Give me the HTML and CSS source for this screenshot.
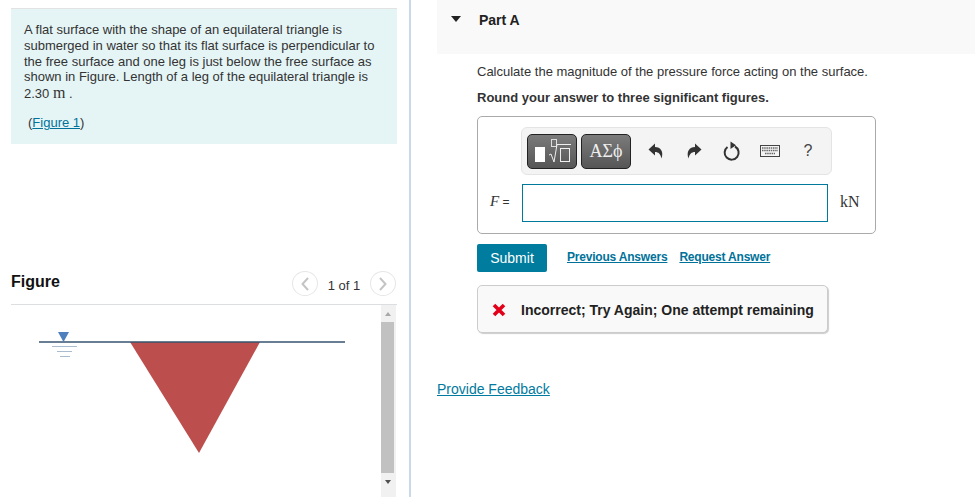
FILE: index.html
```html
<!DOCTYPE html>
<html lang="en">
<head>
    <meta charset="UTF-8">
    <title>Part A</title>
    <link rel="stylesheet" href="styles.css">
</head>
<body>
    <div class="page">
        <div class="left">
            <div class="intro">
                <p>A flat surface with the shape of an equilateral triangle is submerged in water so that its flat surface is perpendicular to the free surface and one leg is just below the free surface as shown in Figure. Length of a leg of the equilateral triangle is<br>2.30 <span class="math meter">m</span> .</p>
                <p class="figlink">(<a href="#">Figure 1</a>)</p>
            </div>

            <div class="fighead">
                <h2>Figure</h2>
                <div class="pager">
                    <span class="circle"><svg width="8" height="14" viewBox="0 0 8 14"><path d="M7 1 L1.5 7 L7 13" fill="none" stroke="#c4c4c4" stroke-width="2"/></svg></span>
                    <span class="count">1 of 1</span>
                    <span class="circle"><svg width="8" height="14" viewBox="0 0 8 14"><path d="M1 1 L6.5 7 L1 13" fill="none" stroke="#c4c4c4" stroke-width="2"/></svg></span>
                </div>
            </div>

            <div class="figbody">
                <svg class="figure" width="370" height="192" viewBox="11 305 370 192">
                    <polygon points="130,342 260,342 199,453" fill="#bc4f4d"/>
                    <line x1="39" y1="342" x2="345" y2="342" stroke="#34536f" stroke-width="1.6"/>
                    <polygon points="58,332 69,332 63.5,342" fill="#4f7fbc"/>
                    <line x1="52" y1="346.5" x2="77" y2="346.5" stroke="#a9bccd"/>
                    <line x1="57" y1="351.5" x2="72" y2="351.5" stroke="#a9bccd"/>
                    <line x1="60" y1="356.5" x2="70" y2="356.5" stroke="#a9bccd"/>
                </svg>
                <div class="scrollbar">
                    <span class="arrow up"></span>
                    <span class="thumb"></span>
                    <span class="arrow down"></span>
                </div>
            </div>
        </div>

        <div class="right">
            <div class="parthead">
                <span class="caret"></span>
                <h3>Part A</h3>
            </div>
            <div class="part">
                <p class="question">Calculate the magnitude of the pressure force acting on the surface.</p>
                <p class="round">Round your answer to three significant figures.</p>

                <div class="answer">
                    <div class="toolbar">
                        <button class="tool" type="button">
                            <svg width="44" height="28" viewBox="0 0 44 28">
                                <rect x="5" y="10" width="10" height="15" fill="#fff"/>
                                <rect x="21.500" y="2.500" width="5" height="7" fill="none" stroke="#ddd"/>
                                <path d="M19 18 L21 17 L24 25 L27 7.500 L41 7.500" fill="none" stroke="#eee"/>
                                <rect x="30.500" y="11.500" width="9" height="13" fill="none" stroke="#eee"/>
                            </svg>
                        </button>
                        <button class="tool greek" type="button">ΑΣϕ</button>
                        <span class="icon">
                            <svg width="16" height="16" viewBox="0 0 16 16"><path d="M0.500 6.500 L7 0.500 V4 C12.500 4 16 8.500 13.500 15.500 C12.500 11 10.500 9 7 9 V12.500 Z" fill="#333"/></svg>
                        </span>
                        <span class="icon">
                            <svg width="16" height="16" viewBox="0 0 16 16"><path d="M15.500 6.500 L9 0.500 V4 C3.500 4 0 8.500 2.500 15.500 C3.500 11 5.500 9 9 9 V12.500 Z" fill="#333"/></svg>
                        </span>
                        <span class="icon">
                            <svg width="18" height="20" viewBox="0 0 18 20"><path d="M4.500 6 A7 7 0 1 0 12 5.500" fill="none" stroke="#333" stroke-width="2"/><path d="M7.500 0.500 L7.500 8 L13 4.200 Z" fill="#333"/></svg>
                        </span>
                        <span class="icon">
                            <svg width="20" height="12" viewBox="0 0 20 12"><rect x="0.500" y="0.500" width="19" height="11" fill="#f4f4f4" stroke="#444"/><path d="M2 3 H18 M2 5.500 H18 M5 8.500 H15" stroke="#666" stroke-width="1.500" stroke-dasharray="1.500 0.700"/></svg>
                        </span>
                        <span class="icon help">?</span>
                    </div>
                    <div class="inputrow">
                        <label class="lhs"><span class="math italic">F</span> =</label>
                        <input class="field" type="text">
                        <span class="math unit">kN</span>
                    </div>
                </div>

                <div class="actions">
                    <button class="submit" type="button">Submit</button>
                    <a class="action" href="#">Previous Answers</a>
                    <a class="action" href="#">Request Answer</a>
                </div>

                <div class="feedback">
                    <svg width="14" height="14" viewBox="0 0 14 14"><path d="M2 2 L12 12 M12 2 L2 12" stroke="#e2001a" stroke-width="3.600"/></svg>
                    <span>Incorrect; Try Again; One attempt remaining</span>
                </div>
            </div>
            <a class="provide" href="#">Provide Feedback</a>
        </div>
    </div>
</body>
</html>
```

FILE: styles.css
```css
*{margin:0; padding:0; box-sizing:border-box;}
html,body{height:100%; overflow:hidden;}
body{font-family:"Liberation Sans", Arial, sans-serif; font-size:14px; color:#333; background:#fff;}
a{color:#00729a;}
.page{display:flex; height:497px;}
.math{font-family:"Liberation Serif", "Times New Roman", serif;}
.italic{font-style:italic;}
.meter{font-size:16px;}

.left{width:411px; height:497px; padding:8px 12px 0 11px; border-right:2px solid #c9d9e8; flex-shrink:0;}
.intro{height:136px; padding:13px 13px 0 13px; font-size:13px; background:#e5f5f6; border-top:1px solid #e2e2e2; line-height:15.8px;}
.intro p:first-child{height:79px;}
.figlink{margin:14px 0 0 4px; line-height:16px;}
.fighead{display:flex; justify-content:space-between; height:33px; margin-top:128px; border-bottom:1px solid #dcdfe2;}
.fighead h2{font-size:16px; color:#111; line-height:20px;}
.pager{display:flex; align-items:flex-start; height:25px; margin:-1px 1px 0 0;}
.circle{display:flex; align-items:center; justify-content:center; width:26px; height:25px; border:1px solid #e6e6e6; border-radius:50%;}
.count{width:52px; padding-top:2px; text-align:center; font-size:13px; line-height:26px;}
.figbody{display:flex; height:192px;}
.figure{display:block; flex-shrink:0;}
.scrollbar{display:flex; flex-direction:column; align-items:center; width:15px; height:192px; background:#f1f1f1;}
.thumb{width:13px; height:151px; margin-right:2px; background:#c1c1c1;}
.arrow{width:0; height:0; border-left:3.5px solid transparent; border-right:3.5px solid transparent;}
.arrow.up{margin:7px 2px 6px 0; border-bottom:4px solid #a8a8a8;}
.arrow.down{margin:7px 2px 0 0; border-top:4px solid #505050;}

.right{flex:1; padding-left:26px;}
.parthead{display:flex; height:54px; padding:12px 0 0 14px; background:#f9f9f9;}
.caret{width:0; height:0; margin-top:4px; border-left:5.5px solid transparent; border-right:5.5px solid transparent; border-top:6px solid #222;}
.parthead h3{margin-left:18px; font-size:14px; color:#222; line-height:16px;}
.part{padding-left:40px;}
.question{margin-top:10px; font-size:13px; line-height:16px;}
.round{margin-top:10px; font-size:13px; font-weight:bold; line-height:16px;}
.answer{width:399px; height:118px; margin-top:10px; padding:10px 0 0 11px; border:1px solid #aaa; border-radius:5px;}
.toolbar{display:flex; align-items:center; width:311px; height:48px; margin-left:32px; padding-left:5px; background:#f4f4f4; border:1px solid #e4e4e4; border-radius:6px;}
.tool{display:flex; align-items:center; justify-content:center; width:50px; height:35px; margin-right:4px; color:#eee; background:linear-gradient(#7b7b7b,#565656); border:1px solid #222; border-radius:5px;}
.greek{font-family:"Liberation Serif", serif; font-size:18px; margin-right:6px;}
.icon{display:flex; align-items:center; justify-content:center; width:38px; height:34px;}
.help{font-size:16px; color:#444;}
.inputrow{display:flex; align-items:center; margin-top:9px;}
.lhs{width:33px; padding:0 0 3px 1px; font-size:12px; white-space:nowrap;}
.lhs .math{font-size:15px;}
.field{width:306px; height:38px; border:1.5px solid #007a9c; outline:0; background:#fff;}
.unit{margin:0 0 3px 12px; font-size:16px;}
.actions{display:flex; align-items:center; margin-top:10px;}
.submit{width:70px; height:28px; color:#fff; background:#007c9e; border:none; border-radius:2px; font-family:"Liberation Sans", Arial, sans-serif; font-size:14px;}
.action{margin-left:12px; font-size:12px; font-weight:bold; letter-spacing:-0.2px; margin-top:-3px;}
.submit + .action{margin-left:20px;}
.feedback{display:flex; align-items:center; gap:15px; width:351px; height:48px; margin-top:13px; padding:1px 0 0 14px; color:#222; font-size:14px; font-weight:bold; background:#f9f9f9; border:1px solid #ccc; border-radius:5px; box-shadow:1px 1px 1px #ccc;}
.provide{display:inline-block; margin-top:48px; color:#007a9e; line-height:16px;}
```
